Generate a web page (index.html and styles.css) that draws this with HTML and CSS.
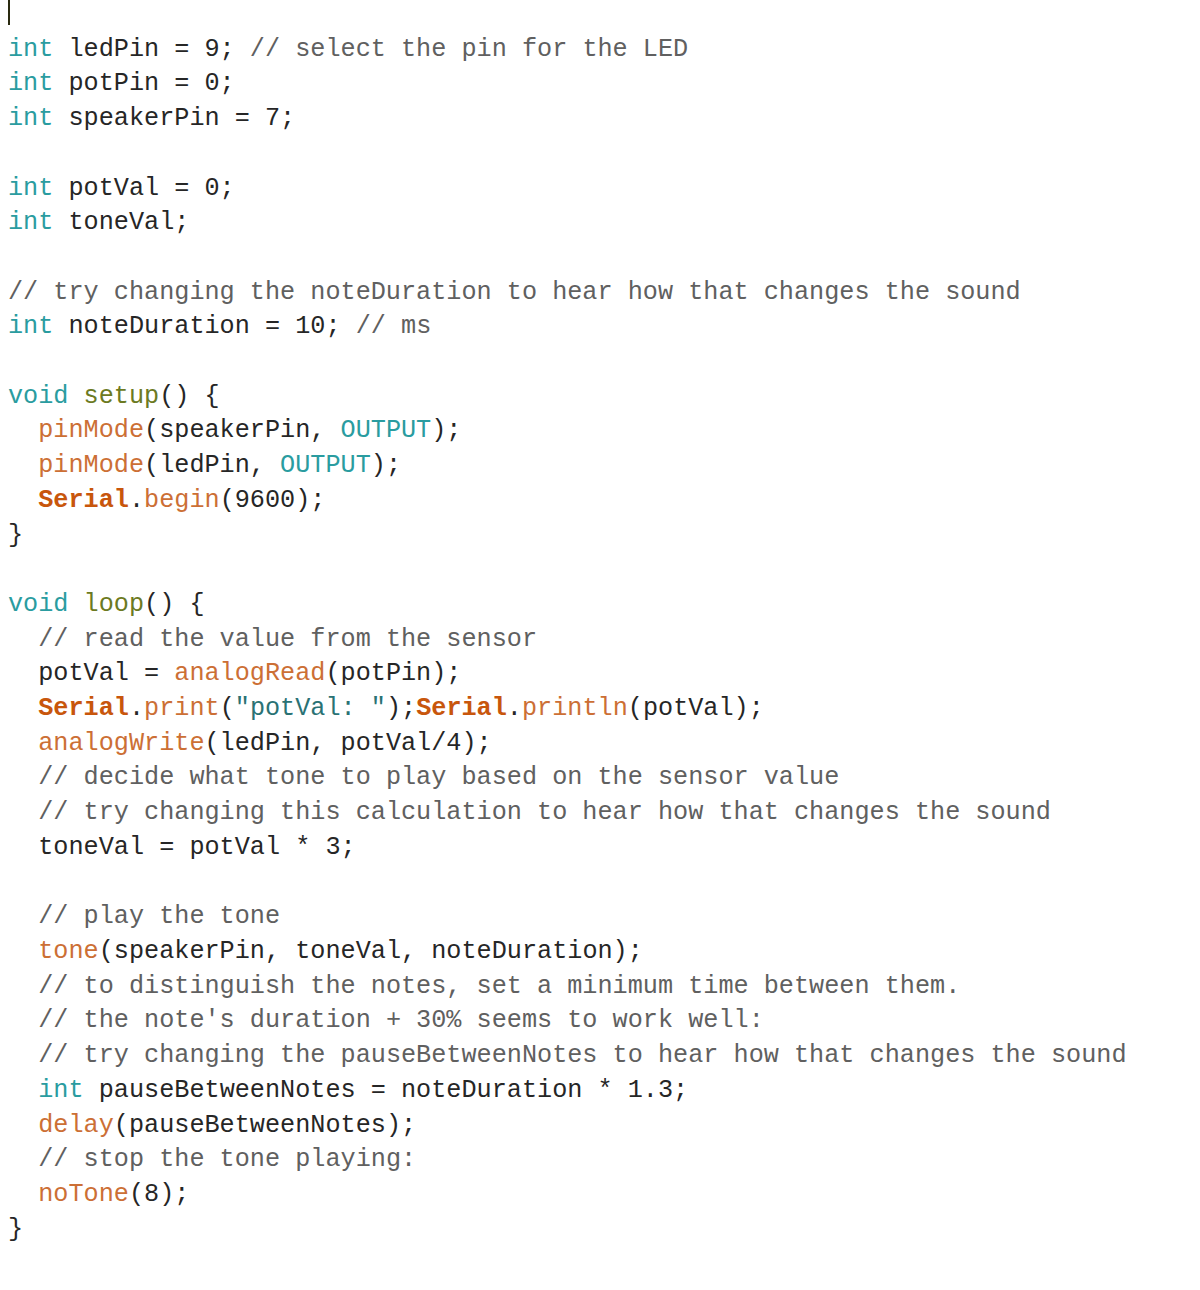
FILE: index.html
```html
<!DOCTYPE html>
<html>
<head>
<meta charset="utf-8">
<link rel="stylesheet" href="styles.css">
</head>
<body>
<pre class="code"><span class="caret"></span>
<span class="ty">int</span> ledPin = 9; <span class="cm">// select the pin for the LED</span>
<span class="ty">int</span> potPin = 0;
<span class="ty">int</span> speakerPin = 7;

<span class="ty">int</span> potVal = 0;
<span class="ty">int</span> toneVal;

<span class="cm">// try changing the noteDuration to hear how that changes the sound</span>
<span class="ty">int</span> noteDuration = 10; <span class="cm">// ms</span>

<span class="ty">void</span> <span class="st">setup</span>() {
  <span class="fn">pinMode</span>(speakerPin, <span class="ty">OUTPUT</span>);
  <span class="fn">pinMode</span>(ledPin, <span class="ty">OUTPUT</span>);
  <span class="kw">Serial</span>.<span class="fn">begin</span>(9600);
}

<span class="ty">void</span> <span class="st">loop</span>() {
  <span class="cm">// read the value from the sensor</span>
  potVal = <span class="fn">analogRead</span>(potPin);
  <span class="kw">Serial</span>.<span class="fn">print</span>(<span class="str">"potVal: "</span>);<span class="kw">Serial</span>.<span class="fn">println</span>(potVal);
  <span class="fn">analogWrite</span>(ledPin, potVal/4);
  <span class="cm">// decide what tone to play based on the sensor value</span>
  <span class="cm">// try changing this calculation to hear how that changes the sound</span>
  toneVal = potVal * 3;

  <span class="cm">// play the tone</span>
  <span class="fn">tone</span>(speakerPin, toneVal, noteDuration);
  <span class="cm">// to distinguish the notes, set a minimum time between them.</span>
  <span class="cm">// the note's duration + 30% seems to work well:</span>
  <span class="cm">// try changing the pauseBetweenNotes to hear how that changes the sound</span>
  <span class="ty">int</span> pauseBetweenNotes = noteDuration * 1.3;
  <span class="fn">delay</span>(pauseBetweenNotes);
  <span class="cm">// stop the tone playing:</span>
  <span class="fn">noTone</span>(8);
}
</pre>
</body>
</html>
```
FILE: styles.css
```css
html, body {
  margin: 0;
  padding: 0;
  background: #ffffff;
}

body {
  padding-left: 8px;
}

.code {
  margin: -2px 0 0 0;
  font-family: "Liberation Mono", "Courier New", monospace;
  font-size: 25.2px;
  line-height: 34.7px;
  color: #262626;
  white-space: pre;
}

.caret {
  display: inline-block;
  width: 2px;
  height: 25px;
  background: #2a2a10;
  vertical-align: top;
  margin-top: 2px;
}

.ty { color: #2a9ca0; }
.cm { color: #606060; }
.fn { color: #cc6f35; }
.st { color: #6c7a22; }
.kw { color: #c8560c; font-weight: bold; }
.str { color: #2a7274; }
```
